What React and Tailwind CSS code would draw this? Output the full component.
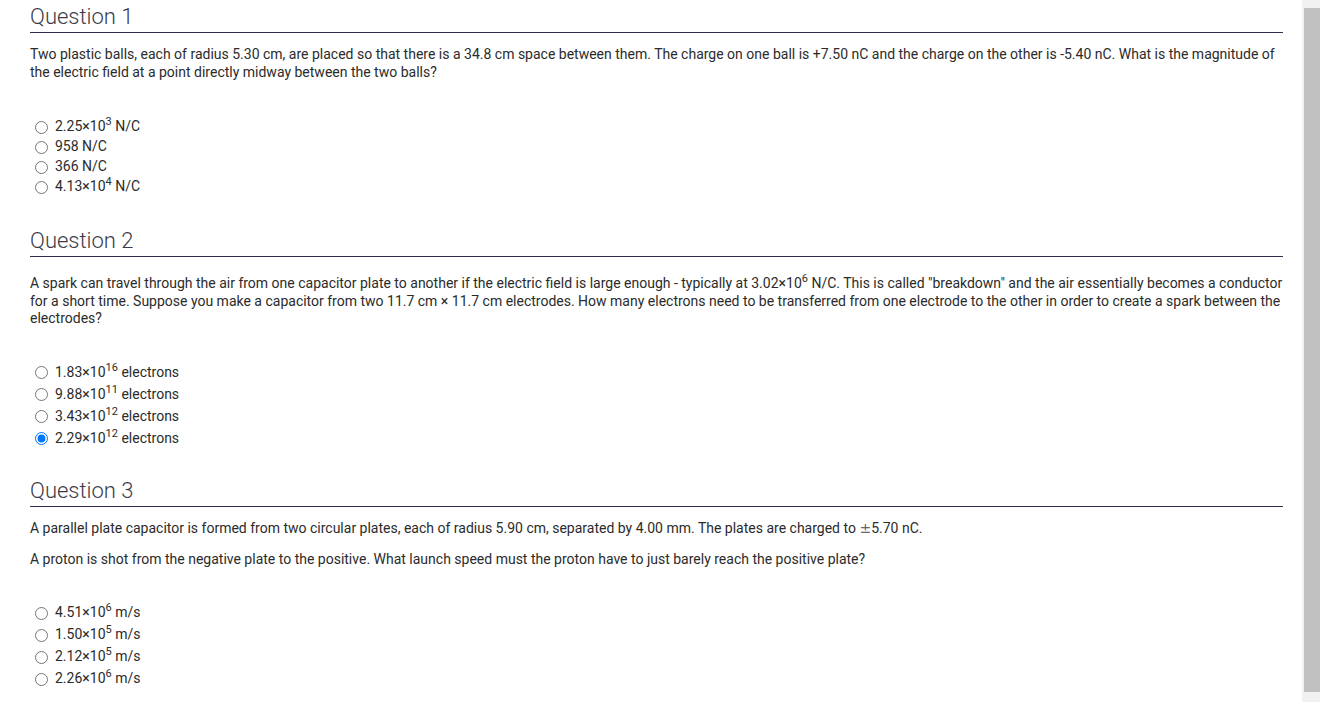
import React from 'react';

const Sup = ({ children }) => (
  <sup className="text-[11px] top-[-6px] leading-none">{children}</sup>
);

const questions = [
  {
    title: 'Question 1',
    top: 'mt-0',
    textTop: 'mt-[13px]',
    optsTop: 'mt-[36px]',
    rowH: 'h-[20px]',
    paras: [
      <>
        Two plastic balls, each of radius 5.30 cm, are placed so that there is a 34.8 cm space between them. The
        charge on one ball is +7.50 nC and the charge on the other is -5.40 nC. What is the magnitude of the electric
        field at a point directly midway between the two balls?
      </>,
    ],
    options: [
      { base: '2.25×10', exp: '3', unit: 'N/C' },
      { base: '958 N/C' },
      { base: '366 N/C' },
      { base: '4.13×10', exp: '4', unit: 'N/C' },
    ],
    checked: -1,
  },
  {
    title: 'Question 2',
    top: 'mt-[27px]',
    textTop: 'mt-[18px]',
    optsTop: 'mt-[34px]',
    rowH: 'h-[22px]',
    paras: [
      <>
        A spark can travel through the air from one capacitor plate to another if the electric field is large enough -
        typically at 3.02×10<Sup>6</Sup> N/C. This is called "breakdown" and the air essentially becomes a conductor
        for a short time. Suppose you make a capacitor from two 11.7 cm × 11.7 cm electrodes. How many electrons need
        to be transferred from one electrode to the other in order to create a spark between the electrodes?
      </>,
    ],
    options: [
      { base: '1.83×10', exp: '16', unit: 'electrons' },
      { base: '9.88×10', exp: '11', unit: 'electrons' },
      { base: '3.43×10', exp: '12', unit: 'electrons' },
      { base: '2.29×10', exp: '12', unit: 'electrons' },
    ],
    checked: 3,
  },
  {
    title: 'Question 3',
    top: 'mt-[24px]',
    textTop: 'mt-[13px]',
    optsTop: 'mt-[34px]',
    rowH: 'h-[22px]',
    paras: [
      <>
        A parallel plate capacitor is formed from two circular plates, each of radius 5.90 cm, separated by 4.00 mm.
        The plates are charged to <span className="text-[#666] font-['DejaVu_Sans',sans-serif]">±</span>5.70 nC.
      </>,
      <>A proton is shot from the negative plate to the positive. What launch speed must the proton have to just barely reach the positive plate?</>,
    ],
    options: [
      { base: '4.51×10', exp: '6', unit: 'm/s' },
      { base: '1.50×10', exp: '5', unit: 'm/s' },
      { base: '2.12×10', exp: '5', unit: 'm/s' },
      { base: '2.26×10', exp: '6', unit: 'm/s' },
    ],
    checked: -1,
  },
];

const Question = ({ q, idx }) => (
  <section className={q.top}>
    <h2 className="pt-1 pb-[2px] border-b border-[#2c2e4c] text-[22px] leading-[26px] font-light text-[#3a3b48]">
      {q.title}
    </h2>
    <div className={q.textTop}>
      {q.paras.map((p, i) => (
        <p key={i} className={i > 0 ? 'mt-[13.5px]' : ''}>
          {p}
        </p>
      ))}
    </div>
    <div className={q.optsTop}>
      {q.options.map((o, i) => (
        <label key={i} className={`flex items-center ${q.rowH}`}>
          <input
            type="radio"
            name={`q${idx}`}
            defaultChecked={q.checked === i}
            className="ml-[5px] mr-[7px] w-[13px] h-[13px]"
          />
          <span>
            {o.base}
            {o.exp && <Sup>{o.exp}</Sup>}
            {o.unit && <> {o.unit}</>}
          </span>
        </label>
      ))}
    </div>
  </section>
);

export default function App() {
  return (
    <div className="flex h-[702px] overflow-hidden bg-white font-['Roboto',sans-serif] text-[14px] leading-[17.5px] text-[#2b2b2b]">
      <div className="flex-1 pl-[30px] pr-[19px]">
        {questions.map((q, i) => (
          <Question key={i} q={q} idx={i} />
        ))}
      </div>
      <div className="w-[18px] bg-[#f1f1f1] pl-[2px] pt-2 pb-[10px]">
        <div className="h-full bg-[#c1c1c1]" />
      </div>
    </div>
  );
}
